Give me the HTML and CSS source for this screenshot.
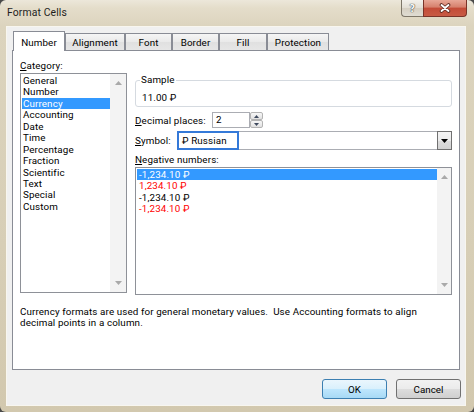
FILE: index.html
```html
<!DOCTYPE html>
<html>
<head>
<meta charset="utf-8">
<title>Format Cells</title>
<link rel="stylesheet" href="styles.css">
</head>
<body>
<div class="window">
  <div class="titlebar">
    <div class="title">Format Cells</div>
    <div class="caption">
      <div class="cap-btn help"><span>?</span></div>
      <div class="cap-btn close">
        <svg width="14" height="10" viewBox="0 0 14 10"><path d="M3.5 2 L10.5 8 M10.5 2 L3.5 8" stroke="#5b2a22" stroke-width="3.6" stroke-linecap="round"/><path d="M3.5 2 L10.5 8 M10.5 2 L3.5 8" stroke="#ffffff" stroke-width="1.9" stroke-linecap="round"/></svg>
      </div>
    </div>
  </div>
  <div class="client">
    <div class="tabs">
      <div class="tab active t-number">Number</div>
      <div class="tab t-align">Alignment</div>
      <div class="tab t-font">Font</div>
      <div class="tab t-border">Border</div>
      <div class="tab t-fill">Fill</div>
      <div class="tab t-prot">Protection</div>
    </div>
    <div class="panel">
      <div class="cols">
        <div class="left">
          <div class="lbl"><u>C</u>ategory:</div>
          <div class="listbox cat">
            <div class="items">
              <div class="item">General</div>
              <div class="item">Number</div>
              <div class="item sel">Currency</div>
              <div class="item">Accounting</div>
              <div class="item">Date</div>
              <div class="item">Time</div>
              <div class="item">Percentage</div>
              <div class="item">Fraction</div>
              <div class="item">Scientific</div>
              <div class="item">Text</div>
              <div class="item">Special</div>
              <div class="item">Custom</div>
            </div>
            <div class="vscroll">
              <svg width="7" height="4" viewBox="0 0 7 4"><path d="M0 4 L3.5 0 L7 4Z" fill="#a9a9a9"/></svg>
              <svg width="7" height="4" viewBox="0 0 7 4"><path d="M0 0 L7 0 L3.5 4Z" fill="#a9a9a9"/></svg>
            </div>
          </div>
        </div>
        <div class="right">
          <fieldset class="sample">
            <legend>Sample</legend>
            <div class="sample-val">11.00 ₽</div>
          </fieldset>
          <div class="row dec">
            <div class="lbl-w"><u>D</u>ecimal places:</div>
            <div class="spin-input">2</div>
            <div class="spin-btns">
              <span><svg width="5" height="3" viewBox="0 0 5 3"><path d="M0 3 L2.5 0 L5 3Z" fill="#3f4a5e"/></svg></span>
              <span><svg width="5" height="3" viewBox="0 0 5 3"><path d="M0 0 L5 0 L2.5 3Z" fill="#3f4a5e"/></svg></span>
            </div>
          </div>
          <div class="row sym">
            <div class="lbl-w"><u>S</u>ymbol:</div>
            <div class="combo">
              <div class="combo-focus">₽ Russian</div>
              <div class="combo-fill"></div>
              <div class="combo-btn"><svg width="7" height="4" viewBox="0 0 7 4"><path d="M0 0 L7 0 L3.5 4Z" fill="#000"/></svg></div>
            </div>
          </div>
          <div class="lbl neg-lbl"><u>N</u>egative numbers:</div>
          <div class="listbox neg">
            <div class="items">
              <div class="item sel">-1,234.10 ₽</div>
              <div class="item red">1,234.10 ₽</div>
              <div class="item">-1,234.10 ₽</div>
              <div class="item red">-1,234.10 ₽</div>
            </div>
            <div class="vscroll">
              <svg width="7" height="4" viewBox="0 0 7 4"><path d="M0 4 L3.5 0 L7 4Z" fill="#a9a9a9"/></svg>
              <svg width="7" height="4" viewBox="0 0 7 4"><path d="M0 0 L7 0 L3.5 4Z" fill="#a9a9a9"/></svg>
            </div>
          </div>
        </div>
      </div>
      <p class="desc">Currency formats are used for general monetary values.&nbsp; Use Accounting formats to align<br>decimal points in a column.</p>
    </div>
    <div class="buttons">
      <button class="btn ok">OK</button>
      <button class="btn">Cancel</button>
    </div>
  </div>
</div>
</body>
</html>
```
FILE: styles.css
```css
* { box-sizing: border-box; }
html, body { margin: 0; padding: 0; }
body {
  width: 474px;
  height: 412px;
  overflow: hidden;
  background: #4a4a4a;
  font-family: Roboto, "Noto Sans", "DejaVu Sans", sans-serif;
  font-size: 9.8px;
  letter-spacing: 0.12px;
  color: #000;
}
.window {
  width: 474px;
  height: 412px;
  border-radius: 6px;
  background: linear-gradient(180deg, #ece7da 0, #e4ddca 8px, #dcd4be 26px, #d7ceb6 60%, #d2c8ae 100%);
  display: flex;
  flex-direction: column;
}
.titlebar {
  height: 26px;
  flex: none;
  display: flex;
  align-items: flex-start;
  padding: 0 7px;
}
.title {
  font-size: 10.4px;
  line-height: 26px;
  color: #1e1e1e;
}
.caption { margin-left: auto; display: flex; }
.cap-btn {
  height: 17px;
  display: flex;
  align-items: center;
  justify-content: center;
  border: 1px solid #7d7668;
  border-top: none;
}
.help {
  width: 22px;
  border-right: none;
  border-radius: 0 0 0 4px;
  background: linear-gradient(#f3f1ec, #e2ded4 50%, #d5cfc2 51%, #e0dcd2);
}
.help span {
  font-family: "DejaVu Sans", sans-serif;
  font-size: 10px;
  font-weight: bold;
  color: #f6f6f6;
  text-shadow: 0 0 1px #333, 0 0 1px #333;
}
.close {
  width: 44px;
  border-color: #7a3328;
  border-radius: 0 0 4px 0;
  background: linear-gradient(#e8a797, #d6806c 45%, #c34b37 50%, #c85a44 100%);
}
.client {
  flex: none;
  margin: 0 8px 0 6px;
  height: 380px;
  background: #f0f0f0;
  border: 1px solid #f8f6ef;
  padding: 4px 4px 0 5px;
}
.tabs {
  height: 19px;
  display: flex;
  align-items: flex-end;
  padding-left: 1px;
}
.tab {
  height: 17px;
  border: 1px solid #898c95;
  border-bottom: none;
  background: linear-gradient(#f5f5f5, #e9e9e9 50%, #e0e0e0 51%, #e6e6e6);
  display: flex;
  justify-content: center;
  padding-top: 3px;
  line-height: 12px;
  white-space: nowrap;
}
.tab.active {
  height: 20px;
  margin-bottom: -1px;
  padding-top: 5px;
  background: #fff;
  position: relative;
  z-index: 1;
}
.t-number { width: 52px; }
.t-align { width: 60px; }
.t-font { width: 47px; }
.t-border { width: 47px; }
.t-fill { width: 48px; }
.t-prot { width: 62px; }
.panel {
  width: 448px;
  height: 320px;
  background: #fff;
  border: 1px solid #898c95;
  padding: 9px 7px 0;
}
.cols { display: flex; gap: 8px; }
.left { width: 107px; flex: none; }
.right { width: 317px; flex: none; }
.lbl { line-height: 12px; height: 12px; white-space: nowrap; }
.listbox {
  border: 1px solid #8e9198;
  display: flex;
  background: #fff;
}
.cat { margin-top: 1px; height: 220px; }
.items { flex: 1; min-width: 0; padding: 1px 0 0 1px; }
.item {
  height: 11.45px;
  line-height: 11.45px;
  padding-left: 1px;
  white-space: nowrap;
}
.neg .item { padding-left: 2px; }
.item.sel { background: #3399ff; color: #fff; }
.item.red { color: #ff0000; }
.vscroll {
  width: 16px;
  flex: none;
  background: #f3f3f3;
  display: flex;
  flex-direction: column;
  justify-content: space-between;
  align-items: center;
  padding: 7px 0 7px;
}
.neg .vscroll { width: 14px; }
.sample {
  margin: 14px 0 0;
  padding: 0 4px;
  border: 1px solid #d5dae0;
  border-radius: 3px;
}
.sample legend { padding: 0 1px; line-height: 12px; }
.sample-val { line-height: 12px; padding: 6px 0 2px 2px; }
.row { display: flex; align-items: center; }
.dec { margin-top: 5px; height: 16px; }
.dec .lbl-w { width: 77px; }
.spin-input {
  width: 38px;
  height: 16px;
  border: 1px solid #abadb3;
  line-height: 14px;
  padding-left: 3px;
}
.spin-btns {
  width: 13px;
  height: 16px;
  display: flex;
  flex-direction: column;
}
.spin-btns span {
  flex: 1;
  border: 1px solid #b3b3b3;
  border-radius: 2px;
  background: linear-gradient(#f7f7f7, #e1e1e1);
  display: flex;
  align-items: center;
  justify-content: center;
}
.sym { margin-top: 3px; height: 19px; }
.sym .lbl-w { width: 42px; }
.combo {
  width: 275px;
  height: 19px;
  border: 1px solid #abadb3;
  display: flex;
}
.combo-focus {
  width: 62px;
  margin: -1px 0 -1px -1px;
  border: 2px solid #3479d8;
  padding-left: 3px;
  line-height: 15px;
  white-space: nowrap;
}
.combo-fill { flex: 1; }
.combo-btn {
  width: 15px;
  margin: -1px -1px -1px 0;
  border: 1px solid #707070;
  background: linear-gradient(#f3f3f3, #ebebeb 50%, #dddddd 51%, #d2d2d2);
  display: flex;
  align-items: center;
  justify-content: center;
}
.neg-lbl { margin-top: 4px; }
.neg { margin-top: 1px; height: 128px; }
.desc {
  margin: 11px 0 0;
  line-height: 11.45px;
  white-space: nowrap;
}
.buttons {
  display: flex;
  justify-content: flex-end;
  gap: 9px;
  margin-top: 9px;
}
.btn {
  width: 65px;
  height: 20px;
  border: 1px solid #707070;
  border-radius: 3px;
  background: linear-gradient(#f2f2f2, #ebebeb 50%, #dddddd 51%, #cfcfcf);
  font: inherit;
  color: #000;
  padding: 0;
  display: flex;
  align-items: center;
  justify-content: center;
}
.btn.ok {
  border-color: #3c7fb1;
  background: linear-gradient(#eaf6fd, #d9f0fc 50%, #bee6fd 51%, #a7d9f5);
}
```
